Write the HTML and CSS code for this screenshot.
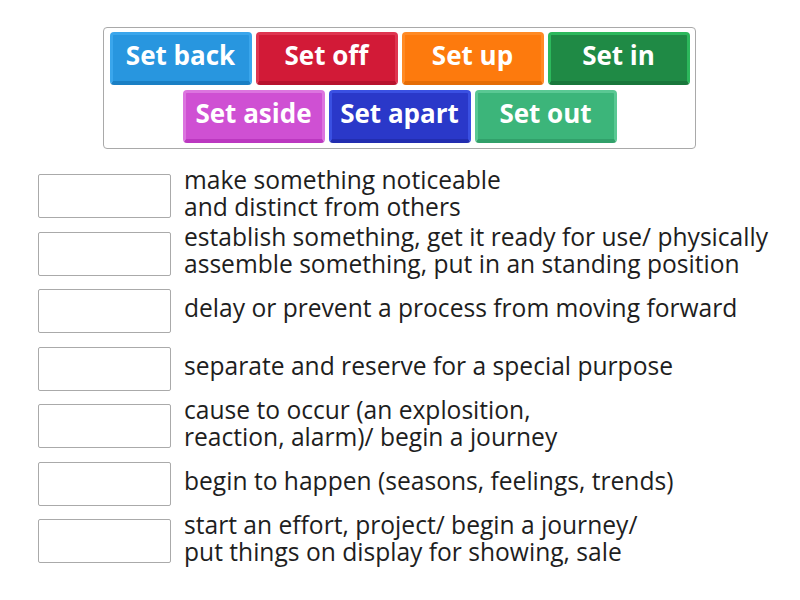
FILE: index.html
```html
<!DOCTYPE html>
<html lang="en">
<head>
<meta charset="utf-8">
<title>Set phrasal verbs</title>
<link rel="stylesheet" href="styles.css">
</head>
<body>
<div class="page">
  <div class="bank">
    <div class="tile c-blue">Set back</div>
    <div class="tile c-red">Set off</div>
    <div class="tile c-orange">Set up</div>
    <div class="tile c-green">Set in</div>
    <div class="tile c-violet">Set aside</div>
    <div class="tile c-navy">Set apart</div>
    <div class="tile c-teal">Set out</div>
  </div>
  <div class="rows">
    <div class="row"><div class="slot"></div><div class="def">make something noticeable<br>and distinct from others</div></div>
    <div class="row"><div class="slot"></div><div class="def">establish something, get it ready for use/ physically<br>assemble something, put in an standing position</div></div>
    <div class="row"><div class="slot"></div><div class="def">delay or prevent a process from moving forward</div></div>
    <div class="row"><div class="slot"></div><div class="def">separate and reserve for a special purpose</div></div>
    <div class="row"><div class="slot"></div><div class="def">cause to occur (an explosition,<br>reaction, alarm)/ begin a journey</div></div>
    <div class="row"><div class="slot"></div><div class="def">begin to happen (seasons, feelings, trends)</div></div>
    <div class="row"><div class="slot"></div><div class="def">start an effort, project/ begin a journey/<br>put things on display for showing, sale</div></div>
  </div>
</div>
</body>
</html>
```
FILE: styles.css
```css
html, body {
  margin: 0;
  padding: 0;
  background: #fff;
}
body {
  font-family: "Open Sans", "DejaVu Sans", sans-serif;
  color: #222;
  min-height: 600px;
}
.page {
  padding: 27px 0 30px 38px;
  width: 800px;
  box-sizing: border-box;
}
.bank {
  box-sizing: border-box;
  width: 593px;
  margin-left: 65px;
  border: 1px solid #a9a9a9;
  border-radius: 4px;
  padding: 4px 5px 5px;
  display: flex;
  flex-wrap: wrap;
  justify-content: center;
  column-gap: 4px;
  row-gap: 5px;
}
.tile {
  box-sizing: border-box;
  width: 142px;
  height: 53px;
  border-radius: 4px;
  border: 3px solid var(--l);
  border-bottom: 4px solid var(--d);
  background: var(--c);
  color: #fff;
  font-weight: 700;
  font-size: 26px;
  display: flex;
  align-items: center;
  justify-content: center;
  padding-bottom: 6px;
}
.c-blue { --c: #2896df; --l: #3aa6ec; --d: #1a7fc4; }
.c-red { --c: #d21a37; --l: #df3550; --d: #b8122d; }
.c-orange { --c: #fd7a0d; --l: #ff8a24; --d: #e56c05; }
.c-green { --c: #1f8a45; --l: #2cb85c; --d: #19773b; }
.c-violet { --c: #cf50d3; --l: #dc75df; --d: #bb38c0; }
.c-navy { --c: #2a38c9; --l: #3a50e2; --d: #222db0; }
.c-teal { --c: #3cb57a; --l: #5ac893; --d: #31a06a; }
.rows {
  margin-top: 25px;
  display: flex;
  flex-direction: column;
  row-gap: 13.5px;
}
.row {
  display: flex;
  align-items: center;
  height: 44px;
  column-gap: 13px;
}
.slot {
  flex: none;
  box-sizing: border-box;
  width: 133px;
  height: 44px;
  border: 1px solid #aaa;
  border-radius: 2px;
  background: #fff;
}
.def {
  font-size: 24.6px;
  line-height: 27px;
  white-space: nowrap;
  color: #1e1e1e;
  padding-bottom: 7px;
}
```
